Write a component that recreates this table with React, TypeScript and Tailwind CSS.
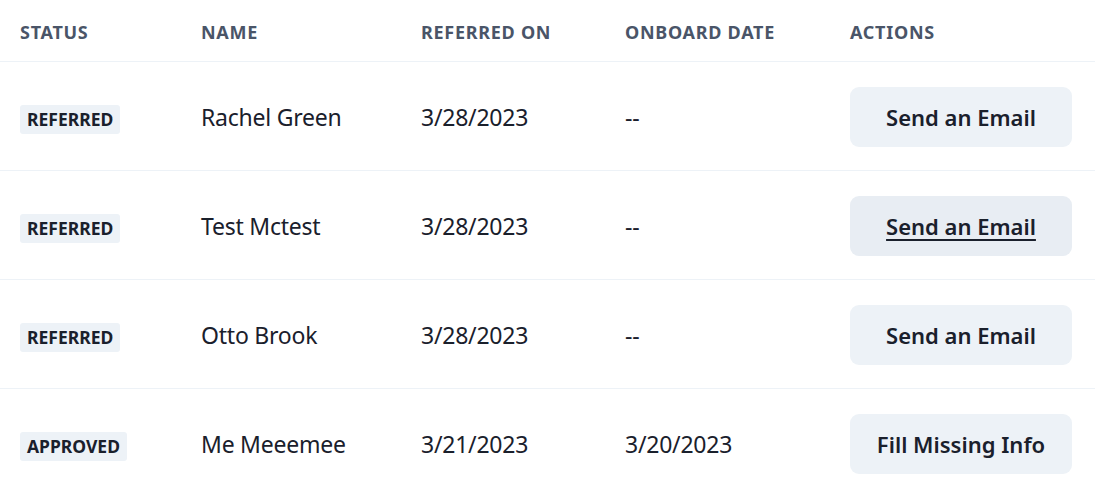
import React from "react";

type Row = { status: string; name: string; referred: string; onboard: string; action: string; hover?: boolean };

const rows: Row[] = [
  { status: "REFERRED", name: "Rachel Green", referred: "3/28/2023", onboard: "--", action: "Send an Email" },
  { status: "REFERRED", name: "Test Mctest", referred: "3/28/2023", onboard: "--", action: "Send an Email", hover: true },
  { status: "REFERRED", name: "Otto Brook", referred: "3/28/2023", onboard: "--", action: "Send an Email" },
  { status: "APPROVED", name: "Me Meeemee", referred: "3/21/2023", onboard: "3/20/2023", action: "Fill Missing Info" },
];

const cols = "grid grid-cols-[181px_220px_204px_225px_1fr]";

export default function App() {
  return (
    <div
      className="w-[1095px] h-[487px] overflow-hidden bg-white text-[#1A202C]"
      style={{ fontFamily: '"Noto Sans", "Open Sans", sans-serif' }}
    >
      <div className={`${cols} h-[62px] items-center border-b border-[#EDF2F7] pl-[20px] pt-[3px] text-[18px] font-bold tracking-[0.04em] text-[#4A5568]`}>
        <div>STATUS</div>
        <div>NAME</div>
        <div>REFERRED ON</div>
        <div>ONBOARD DATE</div>
        <div>ACTIONS</div>
      </div>
      {rows.map((r, i) => (
        <div key={i} className={`${cols} h-[109px] items-center border-b border-[#EDF2F7] pl-[20px] text-[23px] tracking-[-0.01em]`}>
          <div className="pt-[2px]">
            <span className="inline-block rounded-[3px] bg-[#EDF2F7] px-[7px] text-[17.5px] font-bold leading-[29px] tracking-normal text-[#1A202C]">
              {r.status}
            </span>
          </div>
          <div className="pt-[3px]">{r.name}</div>
          <div className="pt-[3px]">{r.referred}</div>
          <div className="pt-[3px]">{r.onboard}</div>
          <div className="pt-[2px]">
            <button
              className={`h-[60px] w-[222px] rounded-[9px] text-[22px] font-semibold tracking-normal text-[#1A202C] ${
                r.hover ? "bg-[#E8EDF3] underline underline-offset-[4px]" : "bg-[#EDF2F7]"
              }`}
            >
              {r.action}
            </button>
          </div>
        </div>
      ))}
    </div>
  );
}
